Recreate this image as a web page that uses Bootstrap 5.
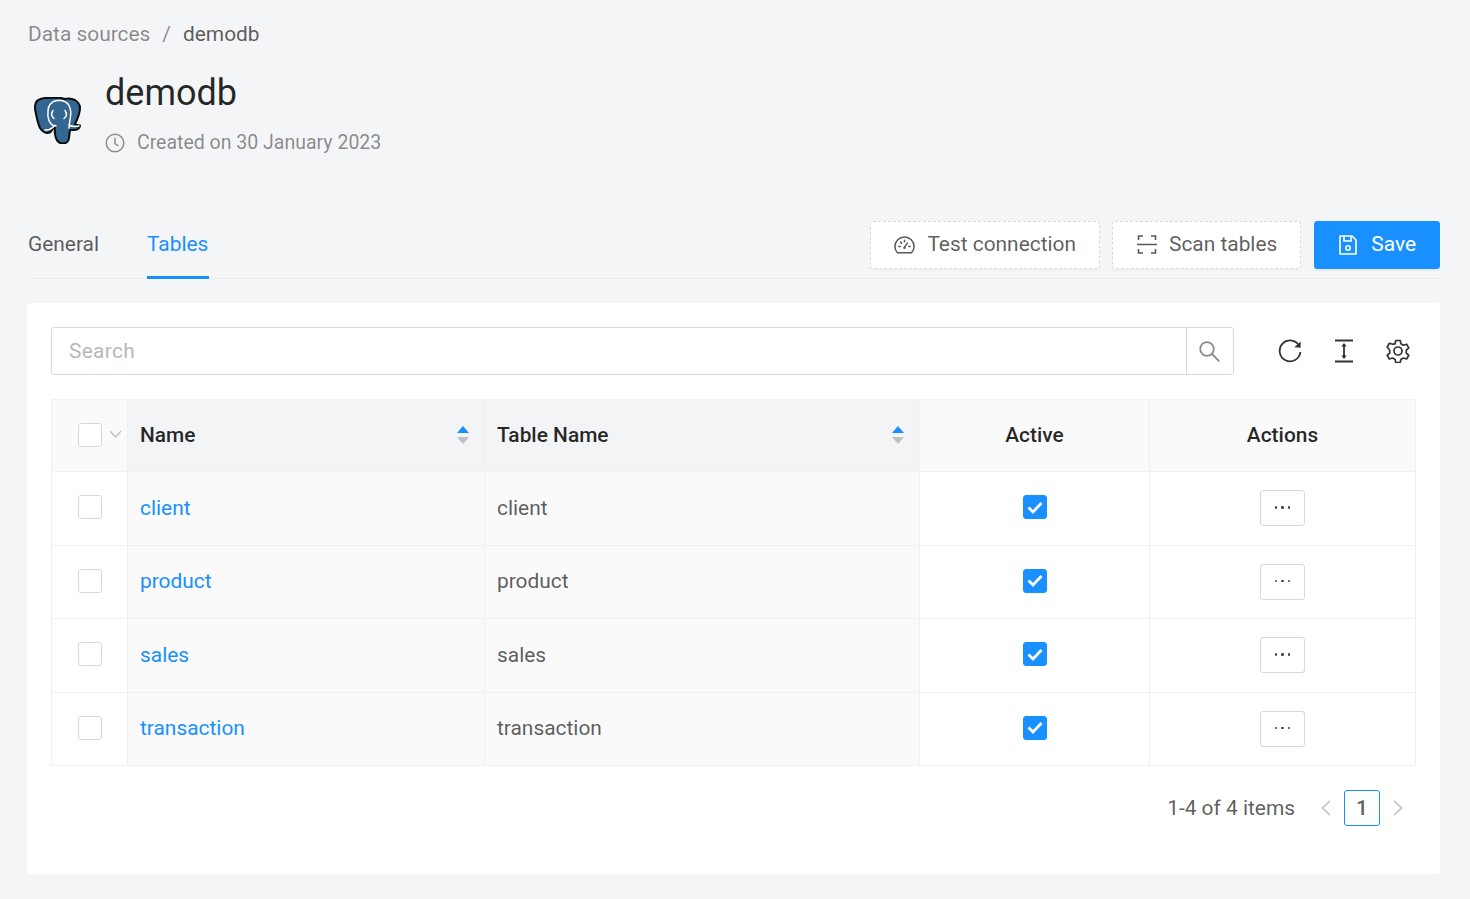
<!DOCTYPE html>
<html lang="en">
<head>
<meta charset="utf-8">
<title>demodb</title>
<link rel="stylesheet" href="https://cdn.jsdelivr.net/npm/bootstrap@5.3.0/dist/css/bootstrap.min.css">
<style>
html,body{height:100%}
body{background:#f4f5f7;font-family:Roboto,"Liberation Sans",sans-serif;font-size:20.9px;line-height:1.5;color:rgba(0,0,0,.65);overflow:hidden}
.page-wrap{padding:17px 30px 0 27px}
.crumbs{height:34px;padding-left:1px;line-height:34px;color:rgba(0,0,0,.45)}
.crumbs .sep{margin:0 12px}
.crumbs .cur{color:rgba(0,0,0,.65)}
.head-row{padding-top:18px;height:140px;align-items:flex-start}
.logo-box{width:61px;height:61px;margin:28px 17px 0 0;padding-left:7px}
.ttl{font-size:36px;line-height:48px;font-weight:400;color:rgba(0,0,0,.85);margin:0}
.sub{color:rgba(0,0,0,.45);margin-top:13px;line-height:26px;font-size:19.5px}
.tabbar{height:69px;margin-top:19px;border-bottom:1px solid #e9ebee;margin-left:1px}
.tab-item{color:rgba(0,0,0,.65);height:69px;line-height:69px;margin-right:48px;text-decoration:none;display:block}
.tab-item.on{color:#1890ff;border-bottom:3px solid #1890ff;min-width:62px}
.acts{margin-top:11px}
.act{height:48px;border-radius:3px;padding:0 23px;display:flex;align-items:center;gap:12px;color:rgba(0,0,0,.65);background:#fff;border:1px dashed #d9d9d9;box-shadow:0 2px 0 rgba(0,0,0,.015)}
.act svg{margin-top:-1px}
.act.wide{padding-left:24px}
.act.pri{background:#1890ff;border:1px solid #1890ff;color:#fff;box-shadow:0 2px 0 rgba(0,0,0,.045);gap:13px;margin-left:5px}
.panel-box{background:#fff;border-radius:3px;margin-top:24px;padding:24px;height:571px}
.srch{height:48px;border:1px solid #d9d9d9;border-radius:3px;flex:1}
.srch input{border:0;outline:0;flex:1;padding:2px 17px 0;font-size:20.9px;font-family:inherit;background:transparent;min-width:0;letter-spacing:.3px}
.srch input::placeholder{color:#b8b8b8;opacity:1}
.srch-btn{width:47px;border-left:1px solid #d9d9d9;display:flex;align-items:center;justify-content:center;padding-right:2px}
.tools{width:182px;padding-left:44px;gap:30px;color:#333}
.grid-t{width:1365px;margin-top:24px;table-layout:fixed;border-collapse:separate;border-spacing:0;border-top:1px solid #f0f0f0;border-left:1px solid #f0f0f0}
.grid-t th,.grid-t td{border-right:1px solid #f0f0f0;border-bottom:1px solid #f0f0f0;padding:0 12px;font-weight:400;height:73.5px;vertical-align:middle}
.grid-t th{font-weight:500;color:rgba(0,0,0,.85);background:#fafafa;height:72px}
.grid-t th.srt{background:#f3f4f6}
.grid-t td.srt{background:#fafafa}
.grid-t a{color:#1890ff;text-decoration:none}
.c1{width:76px}.c2{width:357px}.c3{width:435px}.c4{width:230px}.c5{width:266px}
.cbx{width:24px;height:24px;border:1px solid #d9d9d9;border-radius:3px;background:#fff;display:block;margin-bottom:2px}
.cbx.yes{background:#1890ff;border-color:#1890ff;display:flex;align-items:center;justify-content:center;margin:0 auto 2px}
.sel{padding-left:26px!important;position:relative}
.dn{position:absolute;left:57px;top:29px}
.sorter{display:flex;flex-direction:column;gap:4px;margin-right:3px}
.up{width:0;height:0;border-left:6px solid transparent;border-right:6px solid transparent;border-bottom:7px solid #1890ff}
.down{width:0;height:0;border-left:6px solid transparent;border-right:6px solid transparent;border-top:7px solid #bfbfbf}
.more{width:45px;height:36px;border:1px solid #d9d9d9;border-radius:3px;background:#fff;display:flex;align-items:flex-start;justify-content:center;margin:0 auto;padding:15px 0 0;gap:4px}
.more i{display:block;width:2.5px;height:2.5px;background:#444;border-radius:50%}
.pager{margin-top:24px;height:36px;padding-right:12px;gap:12px}
.pnum{width:36px;height:36px;border:1px solid #1890ff;border-radius:3px;color:rgba(0,0,0,.65);display:flex;align-items:center;justify-content:center;font-weight:500;padding-top:2px}
.cnt{margin-right:13px;padding-top:2px}
</style>
</head>
<body>
<div class="page-wrap">
  <div class="crumbs"><span>Data sources</span><span class="sep">/</span><span class="cur">demodb</span></div>
  <div class="head-row d-flex">
    <div class="logo-box">
      <svg width="47" height="47" viewBox="0 0 47 47"><path d="M11 1C5 1.500 1 4 1 9c0 3 0 5 1 8 1 5 2 10 4 14 2 3 4 5 7 5 2 0 4-1 5-3l3-5c0 4-.5 7 0 9 .5 4 2 9.500 8 9.500 4 0 6-3 6-6l1-7.500c3 0 6 .5 8-1 1.500-1 2-2 2-3.500-2-.5-3.500 0-5-1.500 2-4 5-10 5-16 0-4-2-6-5-8-3-1.500-7-2-10-1-3-1-6-1.500-9-1.500z" fill="#336791" stroke="#0a0a0a" stroke-width="2" stroke-linejoin="round"/><path d="M14 14C14 8 18 4 23 3.500c5-.5 10 1 12 5 2 4 2 8 1.500 11-.3 4-1.500 7-1.500 11.500M14 14c-.5 4 0 7 1 9.500 1.500 4 4 5.500 7 5.500M11 33c4 .5 7-1 10-5M36 28.500c3 1.500 6 1 9 .5M19 13.500c-2 3-1.500 6 1 8M31 13.500c2 3 2 6-1 8" fill="none" stroke="#fff" stroke-width="1.500" stroke-linecap="round"/></svg>
    </div>
    <div>
      <h1 class="ttl">demodb</h1>
      <div class="sub d-flex align-items-center gap-2"><svg width="20" height="20" viewBox="0 0 20 20" fill="none" stroke="#8c8c8c" stroke-width="1.500"><circle cx="10" cy="10" r="8.800"/><path d="M10 4.800V10.600L13.400 13" stroke-linejoin="round"/></svg><span class="ms-1">Created on 30 January 2023</span></div>
    </div>
  </div>
  <div class="tabbar d-flex align-items-start justify-content-between">
    <div class="d-flex"><a class="tab-item" href="#">General</a><a class="tab-item on" href="#">Tables</a></div>
    <div class="d-flex gap-2 acts">
      <div class="act"><svg width="21" height="20" viewBox="0 0 22 20" fill="none" stroke="#595959" stroke-width="1.600"><path d="M3.600 18.200C1.900 16.500 1 14.100 1 11.500 1 6 5.500 1.600 11 1.600S21 6 21 11.500c0 2.600-.9 5-2.600 6.700z" stroke-linejoin="round"/><path d="M11 12.500l3-4.500M5 11.500h1.500M15.500 11.500H17M7 7l1 1M11 5v1.500" stroke-linecap="round"/><circle cx="11" cy="13" r="1.300" fill="#595959" stroke="none"/></svg>Test connection</div>
      <div class="act wide ms-1"><svg width="20" height="19" viewBox="0 0 20 19" fill="none" stroke="#595959" stroke-width="1.600"><path d="M6 1H1.500V5M14 1h4.500V5M6 18H1.500v-4M14 18h4.500v-4M0 9.500h20"/></svg>Scan tables</div>
      <div class="act pri"><svg width="20" height="20" viewBox="0 0 20 20" fill="none" stroke="#fff" stroke-width="1.600"><path d="M2 1h12l4 4v14H2z" stroke-linejoin="round"/><path d="M6 1v5h7V1"/><circle cx="10" cy="13" r="2.200"/></svg>Save</div>
    </div>
  </div>
  <div class="panel-box">
    <div class="d-flex">
      <div class="srch d-flex"><input type="text" placeholder="Search"><div class="srch-btn"><svg width="22" height="22" viewBox="0 0 22 22" fill="none" stroke="#8c8c8c" stroke-width="1.800"><circle cx="9" cy="9" r="6.800"/><path d="M14 14l6.800 6.800" stroke-linecap="round"/></svg></div></div>
      <div class="tools d-flex align-items-center">
        <svg width="24" height="24" viewBox="0 0 24 24" fill="none" stroke="#333" stroke-width="1.800"><path d="M21.500 7.500A10.400 10.400 0 1 0 22.400 13"/><path d="M22.800 2.500l-.3 6.300-6.200-.5" fill="#333" stroke="none"/></svg>
        <svg width="24" height="24" viewBox="0 0 24 24" fill="none" stroke="#333" stroke-width="1.800"><path d="M3 1.500h18M3 22.500h18M12 5v14"/><path d="M12 4l-2.600 3.500h5.200zM12 20l-2.600-3.500h5.200z" fill="#333" stroke="none"/></svg>
        <svg width="24" height="24" viewBox="0 0 24 24" fill="none" stroke="#333" stroke-width="1.700" stroke-linejoin="round"><path d="M9.800 1.500h4.400l.7 3.300 2.500 1.400 3.200-1 2.200 3.700-2.500 2.300v2.800l2.500 2.300-2.200 3.700-3.200-1-2.500 1.400-.7 3.300H9.800l-.7-3.300-2.500-1.400-3.200 1-2.200-3.700 2.500-2.300v-2.800L1.200 8l2.200-3.800 3.200 1L9.100 4.800z"/><circle cx="12" cy="12" r="4"/></svg>
      </div>
    </div>
    <table class="grid-t">
      <colgroup><col class="c1"><col class="c2"><col class="c3"><col class="c4"><col class="c5"></colgroup>
      <thead><tr>
        <th class="sel"><span class="cbx"></span><svg class="dn" width="13" height="10" viewBox="0 0 13 10" fill="none" stroke="#bfbfbf" stroke-width="1.300"><path d="M1 2l5.500 6L12 2"/></svg></th>
        <th class="srt"><div class="d-flex justify-content-between align-items-center">Name<span class="sorter"><span class="up"></span><span class="down"></span></span></div></th>
        <th class="srt"><div class="d-flex justify-content-between align-items-center">Table Name<span class="sorter"><span class="up"></span><span class="down"></span></span></div></th>
        <th class="text-center">Active</th>
        <th class="text-center">Actions</th>
      </tr></thead>
      <tbody>
        <tr><td class="sel"><span class="cbx"></span></td><td class="srt"><a href="#">client</a></td><td class="srt">client</td><td><span class="cbx yes"><svg width="16" height="13" viewBox="0 0 16 13" fill="none" stroke="#fff" stroke-width="2.800"><path d="M1.500 6.500l4.500 4.500 8.500-9"/></svg></span></td><td><div class="more"><i></i><i></i><i></i></div></td></tr>
        <tr><td class="sel"><span class="cbx"></span></td><td class="srt"><a href="#">product</a></td><td class="srt">product</td><td><span class="cbx yes"><svg width="16" height="13" viewBox="0 0 16 13" fill="none" stroke="#fff" stroke-width="2.800"><path d="M1.500 6.500l4.500 4.500 8.500-9"/></svg></span></td><td><div class="more"><i></i><i></i><i></i></div></td></tr>
        <tr><td class="sel"><span class="cbx"></span></td><td class="srt"><a href="#">sales</a></td><td class="srt">sales</td><td><span class="cbx yes"><svg width="16" height="13" viewBox="0 0 16 13" fill="none" stroke="#fff" stroke-width="2.800"><path d="M1.500 6.500l4.500 4.500 8.500-9"/></svg></span></td><td><div class="more"><i></i><i></i><i></i></div></td></tr>
        <tr><td class="sel"><span class="cbx"></span></td><td class="srt"><a href="#">transaction</a></td><td class="srt">transaction</td><td><span class="cbx yes"><svg width="16" height="13" viewBox="0 0 16 13" fill="none" stroke="#fff" stroke-width="2.800"><path d="M1.500 6.500l4.500 4.500 8.500-9"/></svg></span></td><td><div class="more"><i></i><i></i><i></i></div></td></tr>
      </tbody>
    </table>
    <div class="pager d-flex justify-content-end align-items-center">
      <span class="cnt">1-4 of 4 items</span>
      <svg width="12" height="16" viewBox="0 0 12 16" fill="none" stroke="#bfbfbf" stroke-width="1.600"><path d="M10 1L2.500 8l7.500 7"/></svg>
      <span class="pnum">1</span>
      <svg width="12" height="16" viewBox="0 0 12 16" fill="none" stroke="#bfbfbf" stroke-width="1.600"><path d="M2 1l7.500 7L2 15"/></svg>
    </div>
  </div>
</div>
<script src="https://cdn.jsdelivr.net/npm/bootstrap@5.3.0/dist/js/bootstrap.bundle.min.js"></script>
</body>
</html>
